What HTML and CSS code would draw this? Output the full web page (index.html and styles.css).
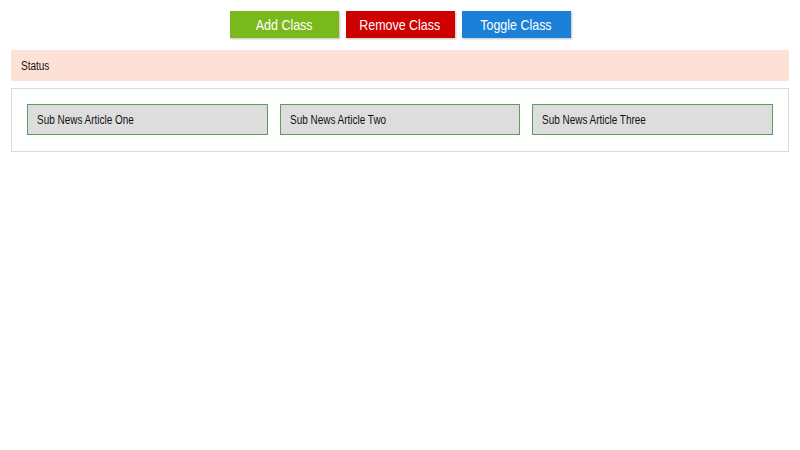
FILE: index.html
```html
<!DOCTYPE html>
<html>
<head>
<meta charset="utf-8">
<link rel="stylesheet" href="styles.css">
</head>
<body>
  <div class="toolbar">
    <button class="btn btn-add"><span class="narrow center">Add Class</span></button>
    <button class="btn btn-remove"><span class="narrow center">Remove Class</span></button>
    <button class="btn btn-toggle"><span class="narrow center">Toggle Class</span></button>
  </div>
  <div class="status"><span class="narrow">Status</span></div>
  <div class="news">
    <div class="article"><span class="narrow">Sub News Article One</span></div>
    <div class="article"><span class="narrow">Sub News Article Two</span></div>
    <div class="article"><span class="narrow">Sub News Article Three</span></div>
  </div>
</body>
</html>
```

FILE: styles.css
```css
html, body {
  margin: 0;
  padding: 0;
  background: #ffffff;
}
body {
  padding: 11px;
  font-family: "Liberation Sans", Arial, sans-serif;
  color: #111;
}
.narrow {
  display: inline-block;
  white-space: nowrap;
  transform: scaleX(0.83);
  transform-origin: left center;
}
.narrow.center {
  transform-origin: center center;
}
.toolbar {
  display: flex;
  justify-content: center;
  gap: 7px;
  margin-bottom: 12px;
}
.btn {
  width: 109px;
  height: 27px;
  border: none;
  margin: 0;
  padding: 0;
  color: #ffffff;
  font-family: "Liberation Sans", Arial, sans-serif;
  font-size: 15px;
  box-shadow: 1px 1px 2px rgba(0, 0, 0, 0.25);
  cursor: pointer;
}
.btn-add { background: #79b91c; }
.btn-remove { background: #cf0000; }
.btn-toggle { background: #1c80d8; }
.status {
  background: #fde1d6;
  height: 31px;
  line-height: 31px;
  padding: 1px 10px 0 10px;
  box-sizing: border-box;
  font-size: 12px;
  margin-bottom: 7px;
  color: #111;
}
.news {
  border: 1px solid #dcdcdc;
  padding: 15px 15px 16px 15px;
  display: flex;
  gap: 12px;
}
.article {
  flex: 1;
  background: #dddddd;
  border: 1px solid #5c9c5c;
  line-height: 29px;
  padding: 1px 9px 0 9px;
  height: 28px;
  font-size: 12px;
  color: #111;
}
```
